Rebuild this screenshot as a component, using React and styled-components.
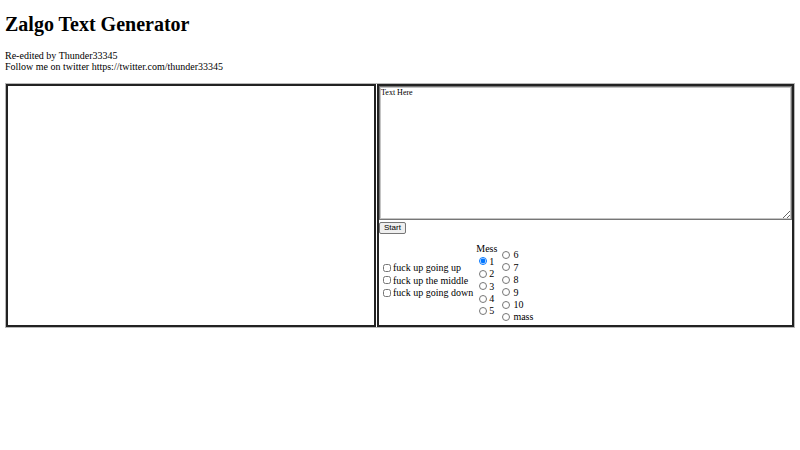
import styled, { createGlobalStyle } from "styled-components";

const GlobalStyle = createGlobalStyle`
  body {
    margin: 0;
    background: #fff;
    color: #000;
    font-family: "Liberation Serif", "Times New Roman", serif;
    font-size: 10px;
  }
`;

const Page = styled.div`
  padding: 0 5px;
`;

const Title = styled.h1`
  font-size: 20px;
  font-weight: bold;
  margin: 13.4px 0;
`;

const Credits = styled.div`
  margin-bottom: 11px;
`;

const Layout = styled.div`
  display: flex;
  gap: 1px;
  width: 790px;
  box-sizing: border-box;
  border: 1px solid #b8b8b8;
`;

const Cell = styled.div`
  box-sizing: border-box;
  width: ${(props) => props.$width}px;
  border: 2px solid #222;
  display: flex;
  flex-direction: column;
  align-items: flex-start;
`;

const TextBox = styled.textarea`
  box-sizing: border-box;
  width: 413px;
  height: 134px;
  margin: 0;
  padding: 1px;
  border: 1px solid #767676;
  box-shadow: inset 0 0 0 1px #c4c4c4;
  font-family: "Liberation Serif", serif;
  font-size: 8px;
  color: #000;
`;

const StartButton = styled.button`
  margin-top: 2px;
  height: 12px;
  padding: 0 4px;
  border: 1px solid #767676;
  border-radius: 2px;
  background: #efefef;
  font-family: "Liberation Sans", Arial, sans-serif;
  font-size: 8px;
  line-height: 10px;
  color: #000;
`;

const Options = styled.div`
  display: flex;
  align-items: center;
  height: 89px;
  margin-top: 2px;
  padding-left: 4px;
`;

const Group = styled.div`
  display: flex;
  flex-direction: column;
  align-self: ${(props) => (props.$top !== undefined ? "flex-start" : "center")};
  margin-top: ${(props) => props.$top || 0}px;
  margin-left: ${(props) => props.$left || 0}px;
`;

const Row = styled.label`
  display: flex;
  align-items: center;
  height: 12.4px;
  white-space: nowrap;
`;

const Heading = styled.div`
  height: 12.4px;
  line-height: 12.4px;
`;

const Check = styled.input`
  width: 8px;
  height: 8px;
  margin: 0 2px 0 0;
`;

const Radio = styled.input`
  width: 8px;
  height: 8px;
  margin: 0 ${(props) => props.$gap}px 0 3px;
`;

const checks = ["fuck up going up", "fuck up the middle", "fuck up going down"];
const messLow = ["1", "2", "3", "4", "5"];
const messHigh = ["6", "7", "8", "9", "10", "mass"];

export default function App() {
  return (
    <Page>
      <GlobalStyle />
      <Title>Zalgo Text Generator</Title>
      <Credits>
        Re-edited by Thunder33345
        <br />
        Follow me on twitter https://twitter.com/thunder33345
      </Credits>
      <Layout>
        <Cell $width={370} />
        <Cell $width={417}>
          <TextBox defaultValue="Text Here" />
          <StartButton>Start</StartButton>
          <Options>
            <Group>
              {checks.map((c) => (
                <Row key={c}>
                  <Check type="checkbox" />
                  {c}
                </Row>
              ))}
            </Group>
            <Group $top={7} $left={3}>
              <Heading>Mess</Heading>
              {messLow.map((m) => (
                <Row key={m}>
                  <Radio type="radio" name="mess" $gap={2} defaultChecked={m === "1"} />
                  {m}
                </Row>
              ))}
            </Group>
            <Group $top={13} $left={2}>
              {messHigh.map((m) => (
                <Row key={m}>
                  <Radio type="radio" name="mess" $gap={3} />
                  {m}
                </Row>
              ))}
            </Group>
          </Options>
        </Cell>
      </Layout>
    </Page>
  );
}
